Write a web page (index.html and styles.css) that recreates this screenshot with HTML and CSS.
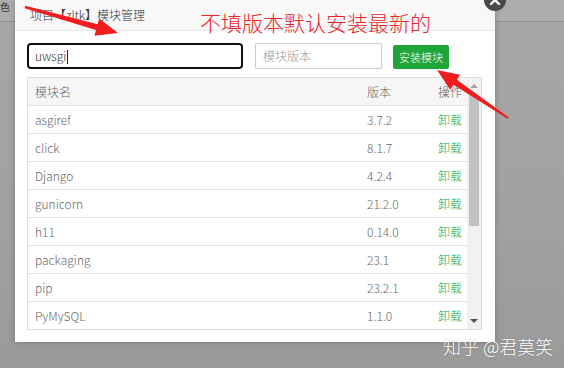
FILE: index.html
```html
<!DOCTYPE html>
<html lang="zh">
<head>
<meta charset="utf-8">
<link rel="stylesheet" href="styles.css">
</head>
<body>
<div class="page">
  <div class="topbar"><span class="topbar-text">色</span></div>
</div>

<div class="dialog">
  <div class="dialog-title">项目【zltk】模块管理</div>
  <div class="dialog-body">
    <div class="form-row">
      <div class="input input-focus">uwsgi<span class="caret"></span></div>
      <div class="input input-version"><span class="placeholder">模块版本</span></div>
      <button class="btn-green">安装模块</button>
    </div>
    <div class="table-wrap">
      <div class="table">
        <div class="row head"><span>模块名</span><span>版本</span><span>操作</span></div>
        <div class="row"><span>asgiref</span><span>3.7.2</span><span class="op">卸载</span></div>
        <div class="row"><span>click</span><span>8.1.7</span><span class="op">卸载</span></div>
        <div class="row"><span>Django</span><span>4.2.4</span><span class="op">卸载</span></div>
        <div class="row"><span>gunicorn</span><span>21.2.0</span><span class="op">卸载</span></div>
        <div class="row"><span>h11</span><span>0.14.0</span><span class="op">卸载</span></div>
        <div class="row"><span>packaging</span><span>23.1</span><span class="op">卸载</span></div>
        <div class="row"><span>pip</span><span>23.2.1</span><span class="op">卸载</span></div>
        <div class="row last"><span>PyMySQL</span><span>1.1.0</span><span class="op">卸载</span></div>
      </div>
      <div class="scrollbar">
        <div class="sb-btn"><span class="tri-up"></span></div>
        <div class="sb-track"><div class="sb-thumb"></div></div>
        <div class="sb-btn"><span class="tri-down"></span></div>
      </div>
    </div>
  </div>
  <div class="close-btn">
    <svg width="22" height="22" viewBox="0 0 22 22"><path d="M7 7 L15 15 M15 7 L7 15" stroke="#fff" stroke-width="2.4" stroke-linecap="round"/></svg>
  </div>
</div>

<div class="note">不填版本默认安装最新的</div>

<svg class="arrows" width="564" height="368" viewBox="0 0 564 368">
  <polygon fill="#ef1d1d" points="25.3,5.8 97.6,24.2 99.2,18.4 118,33 94.4,35.8 96.0,30.0 24.7,8.2"/>
  <polygon fill="#ef1d1d" points="508.6,117.2 456.9,79.8 460.2,74.8 437,70 450.2,89.8 453.5,84.8 507.4,118.8"/>
</svg>

<div class="watermark">知乎 @君莫笑</div>
</body>
</html>
```

FILE: styles.css
```css
* { box-sizing: border-box; }
html, body {
  margin: 0;
  padding: 0;
}
body {
  width: 564px;
  height: 368px;
  overflow: hidden;
  position: relative;
  background: linear-gradient(180deg, #a7a7a7 0%, #a1a1a1 60%, #9a9a9a 100%);
  font-family: "Noto Sans CJK SC", "Open Sans", sans-serif;
  color: #666;
}
.page {
  height: 368px;
}
.topbar {
  height: 22px;
  background: #adadad;
  border-bottom: 1px solid #8f8f8f;
  position: relative;
  overflow: hidden;
}
.topbar-text {
  display: block;
  margin-left: 0;
  margin-top: 0;
  font-size: 10px;
  color: #3a3a3a;
  line-height: 13px;
}

.dialog {
  position: absolute;
  left: 15px;
  top: 0;
  width: 480px;
  height: 342px;
  background: #fff;
  box-shadow: 0 0 6px rgba(0,0,0,0.25);
}
.dialog-title {
  height: 31px;
  background: #f8f8f8;
  border-bottom: 1px solid #e8e8e8;
  padding-left: 15px;
  font-size: 12px;
  font-weight: 300;
  line-height: 30px;
  color: #333;
}
.dialog-body {
  padding: 12px 13px 0 12px;
}
.form-row {
  display: flex;
  align-items: center;
  height: 26px;
  margin-top: 0;
}
.input {
  height: 26px;
  border: 1px solid #ccc;
  border-radius: 2px;
  font-size: 12px;
  font-weight: 300;
  line-height: 24px;
  padding-left: 7px;
  color: #333;
}
.input-focus {
  width: 216px;
  border: 2px solid #111;
  border-radius: 4px;
  line-height: 22px;
  padding-left: 6px;
}
.caret {
  display: inline-block;
  width: 1px;
  height: 14px;
  background: #222;
  vertical-align: -3px;
  margin-left: 1px;
}
.input-version {
  width: 127px;
  margin-left: 12px;
}
.placeholder { color: #999; }
.btn-green {
  margin-left: 11px;
  width: 56px;
  height: 24px;
  border: 0;
  border-radius: 2px;
  background: #20a53a;
  color: #fff;
  font-family: "Noto Sans CJK SC", sans-serif;
  font-size: 11px;
  font-weight: 300;
  padding: 0;
  margin-top: 1px;
}

.table-wrap {
  margin-top: 8px;
  width: 455px;
  height: 253px;
  border: 1px solid #ddd;
  display: flex;
}
.table {
  width: 439px;
}
.row {
  display: grid;
  grid-template-columns: 332px 71px 36px;
  height: 28px;
  border-bottom: 1px solid #e2e2e2;
  font-size: 12px;
  font-weight: 300;
  line-height: 27px;
  color: #666;
}
.row span { padding-left: 7px; white-space: nowrap; }
.row.head { background: #f6f6f6; }
.row.last { border-bottom: 0; height: 27px; }
.op { color: #20a53a; }

.scrollbar {
  width: 14px;
  background: #f1f1f1;
  display: flex;
  flex-direction: column;
}
.sb-btn {
  height: 16px;
  display: flex;
  align-items: center;
  justify-content: center;
}
.sb-track {
  flex: 1;
  padding: 1px 2px;
}
.sb-thumb {
  height: 131px;
  background: #c1c1c1;
}
.tri-up {
  width: 0; height: 0;
  border-left: 4px solid transparent;
  border-right: 4px solid transparent;
  border-bottom: 4px solid #a3a3a3;
}
.tri-down {
  width: 0; height: 0;
  border-left: 4px solid transparent;
  border-right: 4px solid transparent;
  border-top: 4px solid #505050;
}

.close-btn {
  position: absolute;
  right: -11px;
  top: -11px;
  width: 22px;
  height: 22px;
  border-radius: 50%;
  background: #4a4a4a;
}
.close-btn svg { display: block; }

.note {
  position: absolute;
  left: 200px;
  top: 8px;
  font-size: 21px;
  font-weight: 300;
  line-height: 28px;
  color: #e8262a;
  white-space: nowrap;
}
.arrows {
  position: absolute;
  left: 0;
  top: 0;
}
.watermark {
  position: absolute;
  left: 443px;
  top: 334px;
  font-size: 18px;
  font-weight: 300;
  line-height: 24px;
  color: #fff;
  text-shadow: 0 0 2px rgba(0,0,0,0.25);
  white-space: nowrap;
}
```
